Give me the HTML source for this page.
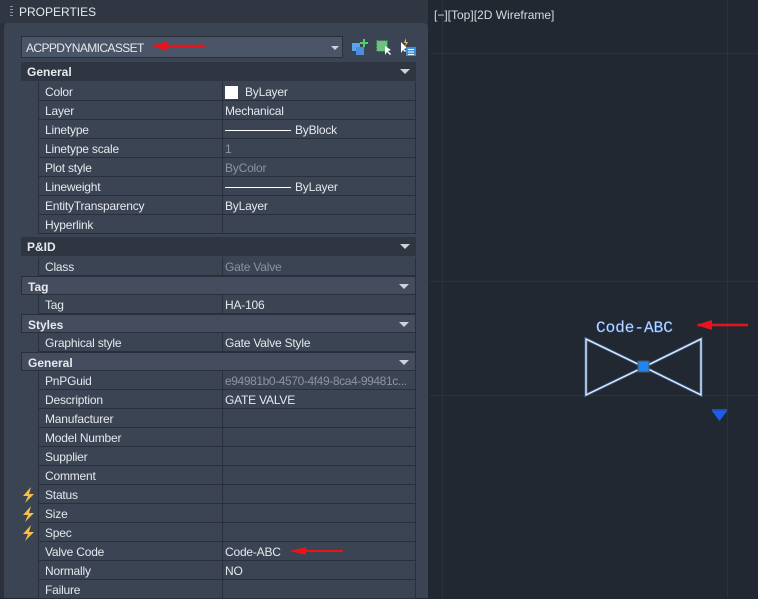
<!DOCTYPE html><html><head><style>
*{margin:0;padding:0;box-sizing:border-box}
body{width:758px;height:598px;overflow:hidden;background:#222831;font-family:"Liberation Sans",sans-serif;font-size:12px;color:#e6e9ee;position:relative}
.abs{position:absolute;white-space:nowrap}
#side{left:0;top:0;width:428px;height:598px;background:#2b303a}
#title{left:0;top:0;width:428px;height:23px;background:#303642}
#panel{left:4px;top:23px;width:424px;height:575px;background:#3b4453;border-radius:4px 4px 0 0}
.r{position:absolute;left:38px;width:378px;height:19px;border:1px solid #2a303b;border-top:none;white-space:nowrap;letter-spacing:-0.2px}
.r .l{position:absolute;left:6px;top:3px}
.r .v{position:absolute;left:183px;top:0;width:194px;height:18px;border-left:1px solid #2a303b;padding-left:2px;padding-top:3px;overflow:hidden;text-overflow:clip}
.g{color:#8d949f}
.h{position:absolute;left:21px;width:395px;height:19px;font-weight:bold;padding:3px 0 0 6px;background:#444c5d;border:1px solid #2a303b}
.h.d{background:#2f3541;border:none}
.h:after{content:"";position:absolute;right:6px;top:7px;border:5px solid transparent;border-top:5px solid #cfd3d9;border-bottom:none}
.ln{display:inline-block;width:66px;height:1px;background:#fff;vertical-align:middle;margin-right:4px}
</style></head><body>
<div class="abs" id="side"></div>
<div class="abs" id="title"></div>
<div class="abs" style="left:10px;top:6px;width:3px;height:12px;background:repeating-linear-gradient(#8a909a 0 1px,transparent 1px 3px)"></div>
<div class="abs" style="left:19px;top:5px;color:#e6e9ee">PROPERTIES</div>
<div class="abs" id="panel"></div>
<div class="abs" style="left:21px;top:36px;width:322px;height:22px;background:#4a5568;border:1px solid #2a303b;padding:4px 0 0 4px;letter-spacing:-0.6px">ACPPDYNAMICASSET</div>
<div class="abs" style="left:331px;top:46px;border:4px solid transparent;border-top:4px solid #cfd3d9;border-bottom:none"></div>
<svg class="abs" style="left:150px;top:40px" width="56" height="12"><path d="M4 6H55" stroke="#e8141b" stroke-width="2.5"/><path d="M2 6L18 1V11Z" fill="#e8141b"/></svg>
<svg class="abs" style="left:350px;top:37px" width="70" height="20"><rect x="2" y="6" width="8" height="8" fill="#5aa6e8"/><rect x="6" y="10" width="8" height="8" fill="#4a90d9"/><path d="M14 2v8M10 6h8" stroke="#4ed06a" stroke-width="2"/><rect x="27" y="4" width="10" height="10" fill="#70c080" stroke="#4ed06a" stroke-dasharray="2 1"/><path d="M35 9l0 9 2-3 3 3 1-1-3-3 3-1z" fill="#fff"/><path d="M51 5l0 11 2-3 2 2 1-1-2-2 3-1z" fill="#fff"/><path d="M56 1l-2 5h2l-1 4 3-5h-2z" fill="#f4c04a"/><rect x="56" y="10" width="10" height="9" fill="#3e8fd8"/><path d="M58 12.5h6M58 15h6M58 17.5h6" stroke="#fff" stroke-width="1"/></svg>

<div class="h d" style="top:62px">General</div>
<div class="r" style="top:82px"><span class="l">Color</span><span class="v"><span style="display:inline-block;width:13px;height:13px;background:#fff;vertical-align:-3px;margin-right:7px"></span>ByLayer</span></div>
<div class="r" style="top:101px"><span class="l">Layer</span><span class="v">Mechanical</span></div>
<div class="r" style="top:120px"><span class="l">Linetype</span><span class="v"><span class="ln"></span>ByBlock</span></div>
<div class="r" style="top:139px"><span class="l">Linetype scale</span><span class="v g">1</span></div>
<div class="r" style="top:158px"><span class="l">Plot style</span><span class="v g">ByColor</span></div>
<div class="r" style="top:177px"><span class="l">Lineweight</span><span class="v"><span class="ln"></span>ByLayer</span></div>
<div class="r" style="top:196px"><span class="l">EntityTransparency</span><span class="v">ByLayer</span></div>
<div class="r" style="top:215px"><span class="l">Hyperlink</span><span class="v"></span></div>
<div class="h d" style="top:237px">P&amp;ID</div>
<div class="r" style="top:257px"><span class="l">Class</span><span class="v g">Gate Valve</span></div>
<div class="h" style="top:276px">Tag</div>
<div class="r" style="top:295px"><span class="l">Tag</span><span class="v">HA-106</span></div>
<div class="h" style="top:314px">Styles</div>
<div class="r" style="top:333px"><span class="l">Graphical style</span><span class="v">Gate Valve Style</span></div>
<div class="h" style="top:352px">General</div>
<div class="r" style="top:371px"><span class="l">PnPGuid</span><span class="v g" style="letter-spacing:-0.4px">e94981b0-4570-4f49-8ca4-99481c...</span></div>
<div class="r" style="top:390px"><span class="l">Description</span><span class="v">GATE VALVE</span></div>
<div class="r" style="top:409px"><span class="l">Manufacturer</span><span class="v"></span></div>
<div class="r" style="top:428px"><span class="l">Model Number</span><span class="v"></span></div>
<div class="r" style="top:447px"><span class="l">Supplier</span><span class="v"></span></div>
<div class="r" style="top:466px"><span class="l">Comment</span><span class="v"></span></div>
<div class="r" style="top:485px"><span class="l">Status</span><span class="v"></span></div>
<div class="r" style="top:504px"><span class="l">Size</span><span class="v"></span></div>
<div class="r" style="top:523px"><span class="l">Spec</span><span class="v"></span></div>
<div class="r" style="top:542px"><span class="l">Valve Code</span><span class="v">Code-ABC</span></div>
<div class="r" style="top:561px"><span class="l">Normally</span><span class="v">NO</span></div>
<div class="r" style="top:580px"><span class="l">Failure</span><span class="v"></span></div>
<svg class="abs" style="left:20px;top:486px" width="18" height="56"><g fill="#f4c04a"><path d="M11 1L3 10h5l-3 7 9-9H9z"/><path d="M11 20L3 29h5l-3 7 9-9H9z"/><path d="M11 39L3 48h5l-3 7 9-9H9z"/></g></svg>
<svg class="abs" style="left:288px;top:545px" width="56" height="12"><path d="M4 6H55" stroke="#e8141b" stroke-width="2"/><path d="M2 6L18 2V10Z" fill="#e8141b"/></svg>

<svg class="abs" style="left:430px;top:0" width="328" height="598">
<g stroke="#2b323c" stroke-width="1"><path d="M12.5 0V598M297.5 0V598M0 53.5H328M0 281.5H328M0 395.5H328"/></g>
<text x="4" y="19" fill="#d8dce2" font-family="Liberation Sans" font-size="12">[−][Top][2D Wireframe]</text>
<g fill="none" stroke="#5b9cf0" stroke-width="3" opacity="0.5"><path d="M156 339L214 367L156 395ZM271 339L214 367L271 395Z"/></g>
<g fill="none" stroke="#e8f0ff" stroke-width="1.3"><path d="M156 339L214 367L156 395ZM271 339L214 367L271 395Z"/></g>
<rect x="208" y="361" width="11" height="11" fill="#1e86f0" stroke="#555" stroke-width="1"/>
<text x="166" y="332" fill="#cfe0ff" font-family="Liberation Mono" font-size="16" stroke="#5b9cf0" stroke-width="0.4">Code-ABC</text>
<path d="M268 325H318" stroke="#e8141b" stroke-width="2.5"/><path d="M266 325L282 320V330Z" fill="#e8141b"/>
<path d="M282 411H297L289.5 421Z" fill="#1a5ef0"/><path d="M282 410H297" stroke="#1a5ef0" stroke-width="1.5"/>
</svg>
</body></html>
